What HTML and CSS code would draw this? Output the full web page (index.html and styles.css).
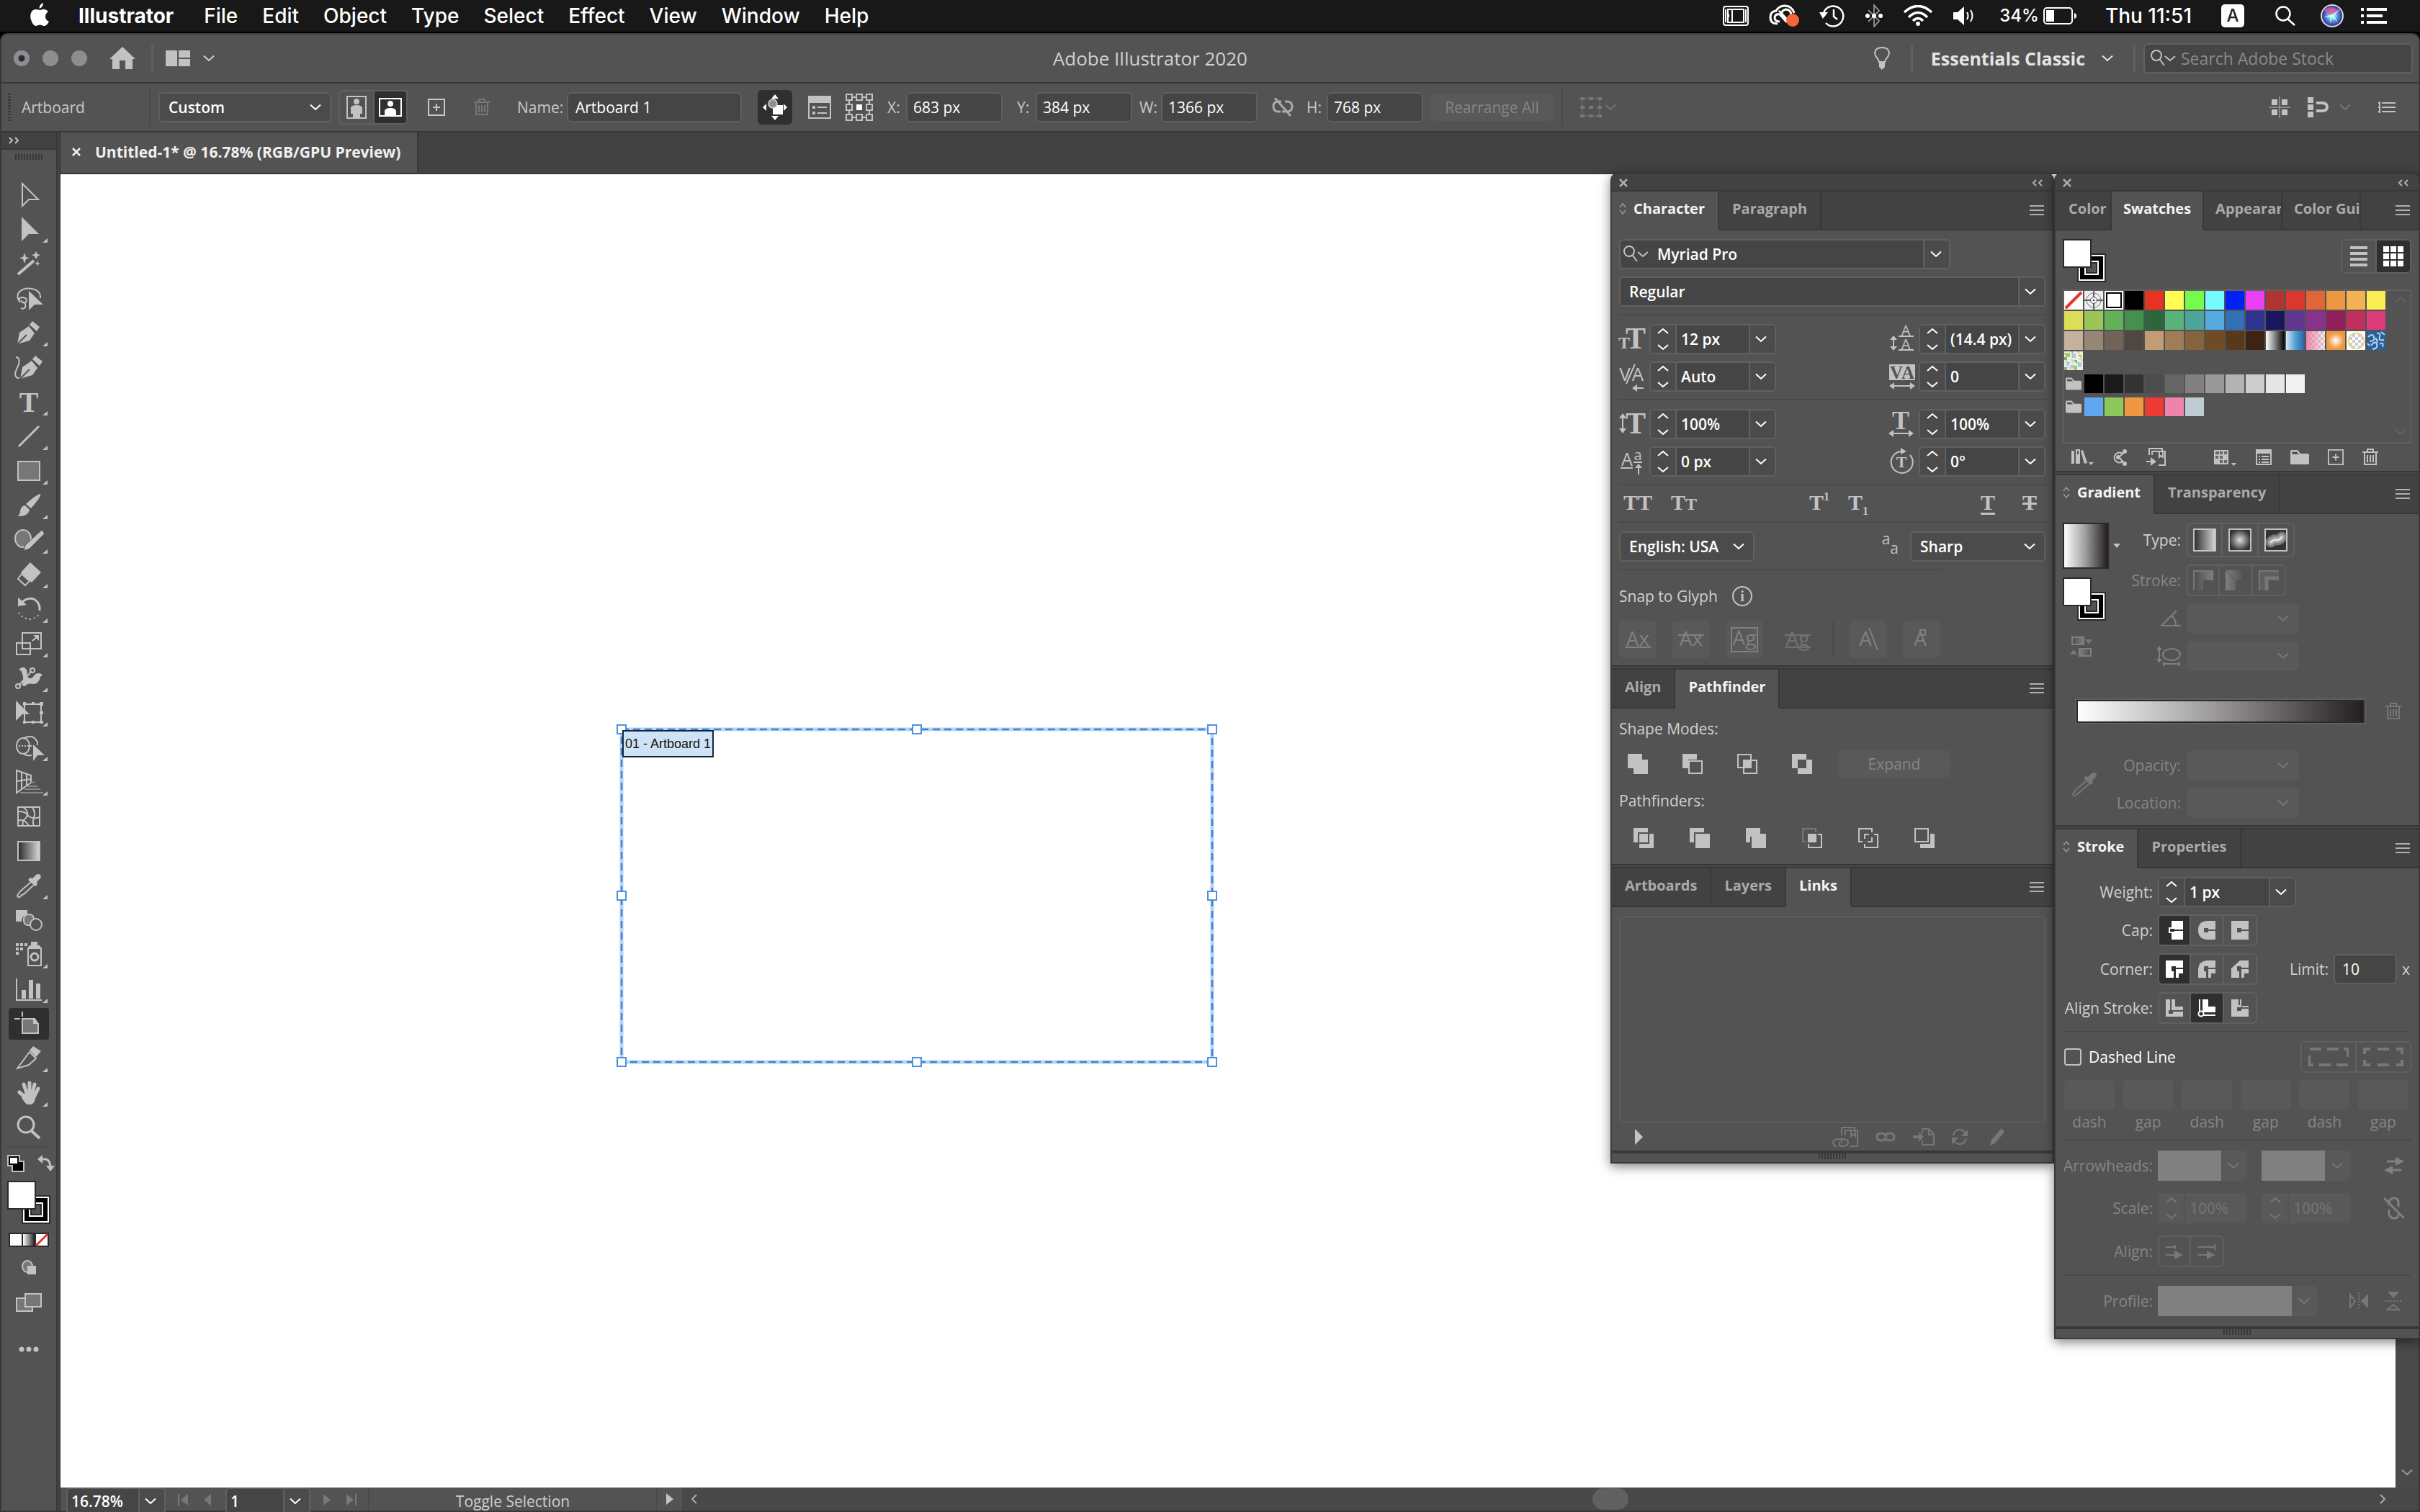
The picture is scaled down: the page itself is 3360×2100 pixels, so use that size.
FILE: index.html
```html
<!DOCTYPE html>
<html lang="en">
<head>
<meta charset="utf-8">
<title>Adobe Illustrator 2020</title>
<link rel="stylesheet" href="styles.css">
</head>
<body>
<svg class="defs" aria-hidden="true">
  <defs>
    <linearGradient id="g-dark"><stop offset="0" stop-color="#2a2a2a"/><stop offset="1" stop-color="#d8d8d8"/></linearGradient>
    <linearGradient id="g-dim"><stop offset="0" stop-color="#4c4c4c"/><stop offset="1" stop-color="#808080"/></linearGradient>
    <linearGradient id="g-dimr"><stop offset="0" stop-color="#808080"/><stop offset="1" stop-color="#4c4c4c"/></linearGradient>
    <linearGradient id="g-light"><stop offset="0" stop-color="#fff"/><stop offset="1" stop-color="#222"/></linearGradient>
    <radialGradient id="g-rad"><stop offset="0" stop-color="#e0e0e0"/><stop offset="1" stop-color="#333"/></radialGradient>
    <radialGradient id="g-siri" cx=".5" cy=".5" r=".5"><stop offset="0" stop-color="#fff"/><stop offset=".35" stop-color="#5fd0e0"/><stop offset=".7" stop-color="#4a5fc8"/><stop offset="1" stop-color="#3a2a6a"/></radialGradient>
  </defs>
  <symbol id="chev" viewBox="0 0 16 10"><path d="M1 1.500L8 8L15 1.500" fill="none" stroke="currentColor" stroke-width="2"/></symbol>
  <symbol id="steps" viewBox="0 0 16 34"><path d="M1 9L8 3L15 9M1 25L8 31L15 25" fill="none" stroke="currentColor" stroke-width="2"/></symbol>
  <symbol id="burger" viewBox="0 0 20 14"><path d="M0 1H20M0 7H20M0 13H20" stroke="currentColor" stroke-width="2"/></symbol>
  <symbol id="updown" viewBox="0 0 10 16"><path d="M1 6L5 1L9 6M1 10L5 15L9 10" fill="none" stroke="currentColor" stroke-width="1.500"/></symbol>
  <symbol id="cross" viewBox="0 0 12 12"><path d="M1 1L11 11M11 1L1 11" stroke="currentColor" stroke-width="2.500"/></symbol>
  <symbol id="ff" viewBox="0 0 14 10"><path d="M1 1L5 5L1 9M9 1L13 5L9 9" fill="none" stroke="currentColor" stroke-width="2"/></symbol>
  <symbol id="rew" viewBox="0 0 14 10"><path d="M5 1L1 5L5 9M13 1L9 5L13 9" fill="none" stroke="currentColor" stroke-width="2"/></symbol>
  <symbol id="trash" viewBox="0 0 22 24"><path d="M7 4V1H15V4M0 5H22M3 5V22H19V5M7 9V19M11 9V19M15 9V19" fill="none" stroke="currentColor" stroke-width="2"/></symbol>
  <symbol id="plus" viewBox="0 0 24 24"><path d="M1 1H23V23H1ZM12 7V17M7 12H17" fill="none" stroke="currentColor" stroke-width="2"/></symbol>
  <symbol id="magnify" viewBox="0 0 40 28"><path d="M15 16L21 24M22 11L29 17L36 11" fill="none" stroke="currentColor" stroke-width="2"/><circle cx="10" cy="10" r="7" fill="none" stroke="currentColor" stroke-width="2"/></symbol>
  <symbol id="folder" viewBox="0 0 26 20"><path d="M0 2Q0 0 2 0H10L14 5H24Q26 5 26 7V18Q26 20 24 20H2Q0 20 0 18Z" fill="currentColor"/><path d="M2.500 2.500H9L12 6H2.500Z" fill="#535353"/></symbol>
  <symbol id="unlink" viewBox="0 0 30 26"><path d="M13 5H7Q2 6 2 12Q2 18 8 19H12M14 19H22Q28 18 28 12Q28 5 21 5H18M4 0L26 25" fill="none" stroke="currentColor" stroke-width="3"/></symbol>
  <symbol id="fillstroke" viewBox="0 0 60 60"><path d="M20 20H60V60H20Z" fill="#2b2b2b"/><path d="M22 22H58V58H22Z" fill="#fff"/><path d="M24 24H56V56H24Z" fill="#000"/><path d="M30 30H50V50H30Z" fill="#fff"/><path d="M32 32H48V48H32Z" fill="#2b2b2b"/><path d="M34 34H46V46H34Z" fill="#535353"/><path d="M0 0H40V40H0Z" fill="#2b2b2b"/><path d="M2 2H38V38H2Z" fill="#fff"/></symbol>
  <symbol id="grip" viewBox="0 0 38 8"><path d="M1 0V8M5 0V8M9 0V8M13 0V8M17 0V8M21 0V8M25 0V8M29 0V8M33 0V8M37 0V8" stroke="#383838" stroke-width="2"/></symbol>
  <symbol id="dropper" viewBox="0 0 34 34"><path d="M20 12L5 25Q4 28 2 29Q0 33 3 33Q6 33 7 30Q11 29 12 27L24 16" fill="none" stroke="currentColor" stroke-width="2"/><path d="M16 9L19 6L22 7L27 2Q30 0 33 2Q35 5 32 8L28 12L29 15L26 18Z" fill="currentColor"/></symbol>
</svg>

<header class="menubar">
  <svg class="apple" viewBox="0 0 26 32"><path d="M18 0Q18 6 12.500 8Q12.500 2 18 0ZM13 10Q15 10 17 9Q21 8 25 12Q21 15 21 19Q21 24 26 26Q23 32 19 32Q17 32 16 31Q13.500 30 11 31Q9 32 7.500 32Q4 31 2 26Q-1 20 1 14Q3 9 8 9Q10 9 13 10Z" fill="#fff"/></svg>
  <nav class="menus">
    <a href="#" class="app">Illustrator</a><a href="#">File</a><a href="#">Edit</a><a href="#">Object</a><a href="#">Type</a><a href="#">Select</a><a href="#">Effect</a><a href="#">View</a><a href="#">Window</a><a href="#">Help</a>
  </nav>
  <div class="tray">
    <svg width="36" height="28" viewBox="0 0 36 28" fill="none" stroke="#fff" stroke-width="2"><rect x="1" y="1" width="34" height="26" rx="3"/><rect x="7" y="5" width="22" height="18"/><path d="M13 5V23M4 5V23M32 5V23M8 12V16"/></svg>
    <svg width="42" height="32" viewBox="0 0 42 32"><path d="M12 27Q2 27 2 18Q2 10 10 9Q14 2 22 2Q32 2 35 12" fill="none" stroke="#fff" stroke-width="3"/><path d="M15 24Q8 24 8 18Q9 13 15 14L25 25M18 14Q17 8 24 7Q31 8 31 15M14 9L28 24" fill="none" stroke="#fff" stroke-width="3"/><circle cx="33" cy="22" r="9" fill="#f7643c"/></svg>
    <svg width="36" height="32" viewBox="0 0 36 32" fill="none" stroke="#fff" stroke-width="2.500"><path d="M6 12A14 14 0 1 1 9 26M20 7V17L25 21"/><path d="M0 11H12L5 20Z" fill="#fff" stroke="none"/></svg>
    <svg width="24" height="32" viewBox="0 0 24 32"><path d="M4 8L19 23L12 31V1L19 9L4 24" fill="none" stroke="#8a8a8a" stroke-width="2"/><circle cx="3" cy="16" r="3" fill="#fff"/><circle cx="12" cy="16" r="3" fill="#fff"/><circle cx="21" cy="16" r="3" fill="#fff"/></svg>
    <svg width="42" height="30" viewBox="0 0 42 30" fill="none" stroke="#fff" stroke-width="3.500"><path d="M2 10Q21 -7 40 10M8 17Q21 4 34 17M14 22Q21 15 28 22"/><circle cx="21" cy="26" r="3" fill="#fff" stroke="none"/></svg>
    <svg width="28" height="26" viewBox="0 0 28 26"><path d="M0 8H6L15 0V26L6 18H0Z" fill="#fff"/><path d="M19 8Q22 13 19 18M24 5Q29 13 24 21" fill="none" stroke="#fff" stroke-width="2"/></svg>
    <span class="battery">34%
      <svg width="46" height="24" viewBox="0 0 46 24"><rect x="1" y="1" width="39" height="22" rx="4" fill="none" stroke="#fff" stroke-width="2"/><rect x="4" y="4" width="11" height="16" fill="#fff"/><path d="M43 8Q46 9 46 12Q46 15 43 16Z" fill="#fff"/></svg>
    </span>
    <span class="clock">Thu 11:51</span>
    <span class="input-src">A</span>
    <svg class="spot" width="30" height="28" viewBox="0 0 30 28" fill="none" stroke="#fff" stroke-width="2.500"><circle cx="12" cy="11" r="9.500"/><path d="M18 18L28 27"/></svg>
    <svg width="32" height="32" viewBox="0 0 32 32"><circle cx="16" cy="16" r="15" fill="url(#g-siri)" stroke="#d8d8e8" stroke-width="2"/><path d="M5 8Q14 0 27 9Q22 13 16 15Q9 14 5 8Z" fill="#d85a9a" opacity=".8"/><path d="M4 18Q12 15 15 14L27 7Q22 12 19 16L24 25L16 18L13 26L13 18Z" fill="#d8ffff" opacity=".7"/></svg>
    <svg width="36" height="22" viewBox="0 0 36 22"><path d="M0 2H4M0 11H4M0 20H4M8 2H36M8 11H30M8 20H36" stroke="#fff" stroke-width="4"/></svg>
  </div>
</header>

<div class="window">
  <div class="titlebar">
    <div class="title-left">
      <div class="lights"><i class="dot-in"></i><i></i><i></i></div>
      <button class="plain" aria-label="Home"><svg width="36" height="32" viewBox="0 0 36 32"><path d="M18 0L36 17H32V31H22V19H14V31H4V17H0Z" fill="#c2c2c2"/></svg></button>
      <span class="vsep"></span>
      <button class="plain arrange" aria-label="Arrange documents"><svg width="34" height="22" viewBox="0 0 34 22"><path d="M0 0H16V22H0ZM18 0H34V10H18ZM18 12H34V22H18Z" fill="#c2c2c2"/></svg><svg class="chev"><use href="#chev"/></svg></button>
    </div>
    <h1>Adobe Illustrator 2020</h1>
    <div class="title-right">
      <svg width="24" height="34" viewBox="0 0 24 34"><path d="M8 22Q7 18 4 15Q2 12 2 9Q3 2 12 2Q21 2 22 9Q22 12 20 15Q17 18 16 22Z" fill="none" stroke="#c2c2c2" stroke-width="2"/><path d="M8 22H16V29L12 33L8 29Z" fill="#c2c2c2"/></svg>
      <span class="vsep"></span>
      <button class="plain workspace">Essentials Classic <svg class="chev"><use href="#chev"/></svg></button>
      <span class="vsep"></span>
      <label class="stock"><svg width="40" height="28"><use href="#magnify"/></svg><input type="text" placeholder="Search Adobe Stock" aria-label="Search Adobe Stock"></label>
    </div>
  </div>

  <div class="controlbar">
    <span class="dots-grip"></span>
    <span class="ctl-name">Artboard</span>
    <span class="hair"></span>
    <div class="select preset"><select aria-label="Preset"><option>Custom</option></select><svg class="chev"><use href="#chev"/></svg></div>
    <div class="seg orient">
      <button aria-label="Portrait"><svg width="28" height="32" viewBox="0 0 28 32"><rect x="1" y="1" width="26" height="30" fill="none" stroke="#c2c2c2" stroke-width="2"/><circle cx="14" cy="8" r="4" fill="#c2c2c2"/><path d="M6 25V16Q8 13 14 13Q20 13 22 16V25H19V31H9V25Z" fill="#c2c2c2"/></svg></button>
      <button class="on" aria-label="Landscape"><svg width="32" height="26" viewBox="0 0 32 26"><rect x="1" y="1" width="30" height="24" fill="none" stroke="#fff" stroke-width="2"/><circle cx="16" cy="8" r="4" fill="#fff"/><path d="M8 25V18Q9 14 16 14Q23 14 24 18V25Z" fill="#fff"/></svg></button>
    </div>
    <button class="plain" aria-label="New artboard"><svg width="24" height="24"><use href="#plus"/></svg></button>
    <button class="plain dim del-art" aria-label="Delete artboard"><svg width="22" height="24"><use href="#trash"/></svg></button>
    <label for="ab-name" class="lab-name">Name:</label><input id="ab-name" class="box w-name" value="Artboard 1">
    <button class="darkbtn" aria-label="Move artwork with artboard"><svg width="34" height="36" viewBox="0 0 34 36"><path d="M17 0L22 6H12ZM17 36L22 30H12ZM0 18L5 13V23ZM34 18L29 13V23Z" fill="#fff"/><rect x="14" y="15" width="14" height="13" fill="#fff"/><circle cx="14" cy="13" r="6" fill="#909090" stroke="#ddd" stroke-width="1.500"/></svg></button>
    <button class="plain opt" aria-label="Artboard options"><svg width="32" height="32" viewBox="0 0 32 32"><path d="M1 1H31V31H1Z" fill="none" stroke="#c2c2c2" stroke-width="2"/><path d="M0 0H32V10H0ZM6 14H10V18H6ZM6 22H10V26H6ZM13 15H26V17H13ZM13 23H26V25H13Z" fill="#c2c2c2"/></svg></button>
    <button class="plain refp" aria-label="Reference point"><svg width="38" height="38" viewBox="0 0 38 38"><path d="M1 1H9V9H1ZM15 1H23V9H15ZM29 1H37V9H29ZM1 15H9V23H1ZM29 15H37V23H29ZM1 29H9V37H1ZM15 29H23V37H15ZM29 29H37V37H29ZM9 5H15M23 5H29M9 33H15M23 33H29M5 9V15M5 23V29M33 9V15M33 23V29" fill="none" stroke="#c2c2c2" stroke-width="2"/><path d="M15 15H23V23H15Z" fill="#fff"/></svg></button>
    <label for="fx" class="lab-x">X:</label><input id="fx" class="box w-num" value="683 px">
    <label for="fy" class="lab-y">Y:</label><input id="fy" class="box w-num" value="384 px">
    <label for="fw" class="lab-w">W:</label><input id="fw" class="box w-num" value="1366 px">
    <button class="plain linkb" aria-label="Constrain proportions"><svg width="30" height="26"><use href="#unlink"/></svg></button>
    <label for="fh" class="lab-h">H:</label><input id="fh" class="box w-num" value="768 px">
    <button class="flat rearr" disabled>Rearrange All</button>
    <span class="hair"></span>
    <button class="plain dim alignto" aria-label="Align to"><svg width="30" height="30" viewBox="0 0 30 30"><path d="M0 3H6M12 3H18M24 3H30M0 15H6M24 15H30M12 15H18M0 27H6M12 27H18M24 27H30" stroke="currentColor" stroke-width="4"/><path d="M3 3V27M27 3V27M3 3H27M3 27H27" stroke="currentColor" stroke-width="1"/></svg><svg class="chev"><use href="#chev"/></svg></button>
    <div class="ctl-right">
      <button class="plain" aria-label="Grid"><svg width="30" height="30" viewBox="0 0 30 30"><path d="M4 4H12V12H4ZM18 4H26V12H18ZM4 18H12V26H4ZM18 18H26V26H18Z" fill="#c2c2c2"/><path d="M15 0V30M0 15H30" stroke="#999" stroke-width="1.500"/></svg></button>
      <button class="plain snap" aria-label="Snap"><svg width="30" height="28" viewBox="0 0 30 28"><path d="M0 0H8V8H0ZM0 10H8V18H0ZM0 20H8V28H0Z" fill="#c2c2c2"/><path d="M12 8H20Q27 8 27 13.500Q27 19 20 19H12" fill="none" stroke="#c2c2c2" stroke-width="4"/></svg><svg class="chev dim"><use href="#chev"/></svg></button>
      <button class="plain" aria-label="Control menu"><svg width="24" height="16" viewBox="0 0 24 16"><path d="M0 2H3M0 8H3M0 14H3M5 2H24M5 8H24M5 14H24M2 0V16" stroke="#c2c2c2" stroke-width="2"/></svg></button>
    </div>
  </div>

  <div class="work">
    <aside class="tools">
      <button class="tools-head" aria-label="Expand tools"><svg width="14" height="10"><use href="#ff"/></svg></button>
      <svg class="tools-grip" width="38" height="8"><use href="#grip"/></svg>
      <div class="toollist">
        <button aria-label="Selection"><svg viewBox="0 0 60 48"><path class="l" d="M21 9V40L30 31L43 31Z"/></svg></button>
        <button aria-label="Direct selection"><svg viewBox="0 0 60 48"><path class="f" d="M20 7V41L30 31H44ZM56 37V43H49Z"/></svg></button>
        <button aria-label="Magic wand"><svg viewBox="0 0 60 48"><path d="M15 39L37 20" class="l w4"/><path class="f" d="M24 9L26 15L31 16L26 18L24 24L22 18L17 16L22 15ZM40 7L42 11L46 12L42 14L40 18L38 14L34 12L38 11ZM42 20L43 23L46 24L43 25L42 28L41 25L38 24L41 23Z"/></svg></button>
        <button aria-label="Lasso"><svg viewBox="0 0 60 48"><path class="l" d="M18 30Q11 22 17 15Q24 9 34 11Q45 13 46 21V24M18 30Q14 23 22 23Q29 24 26 30Q20 31 20 27M20 30Q27 30 25 37Q22 40 19 38"/><path class="f" d="M30 14V41L38 33H50Z"/></svg></button>
        <button aria-label="Pen"><svg viewBox="0 0 60 48"><path class="f" d="M14 40L17 24L30 15L38 25L31 35ZM35 8L45 16L41 22L31 13Z"/><path d="M14 40L27 27" stroke="#535353" stroke-width="2"/><path class="f" d="M56 37V43H49Z"/></svg></button>
        <button aria-label="Curvature"><svg viewBox="0 0 60 48"><path class="f" d="M18 40L21 24L34 15L42 25L35 35ZM39 8L49 16L45 22L35 13Z"/><path d="M18 40L31 27" stroke="#535353" stroke-width="2"/><path class="l" d="M12 10Q18 10 16 20Q13 27 11 32Q11 40 17 39"/></svg></button>
        <button aria-label="Type"><svg viewBox="0 0 60 48"><text x="30" y="38" class="glyph" font-size="40">T</text><path class="f" d="M56 37V43H49Z"/></svg></button>
        <button aria-label="Line segment"><svg viewBox="0 0 60 48"><path class="l w3" d="M16 38L44 10"/><path class="f" d="M56 37V43H49Z"/></svg></button>
        <button aria-label="Rectangle"><svg viewBox="0 0 60 48"><rect x="15" y="11" width="30" height="26" class="l g"/><path class="f" d="M56 37V43H49Z"/></svg></button>
        <button aria-label="Paintbrush"><svg viewBox="0 0 60 48"><path class="f" d="M46 8Q48 11 33 28L26 22Q40 9 46 8ZM25 24L31 30Q29 40 14 39Q18 37 18 31Q20 24 25 24Z"/><path class="f" d="M56 37V43H49Z"/></svg></button>
        <button aria-label="Shaper"><svg viewBox="0 0 60 48"><ellipse cx="22" cy="22" rx="11" ry="12" class="l g"/><path class="f" d="M48 10L52 15L31 36L23 39L25 31Z" stroke="#535353" stroke-width="1"/><path class="f" d="M56 37V43H49Z"/></svg></button>
        <button aria-label="Eraser"><svg viewBox="0 0 60 48"><path class="f" d="M32 7L47 21L34 35L19 21Z"/><path class="l" d="M20 23L31 33L25 39L15 30Z"/><path class="f" d="M56 37V43H49Z"/></svg></button>
        <button aria-label="Rotate"><svg viewBox="0 0 60 48"><path class="l w3" d="M20 15Q28 7 37 10Q46 15 45 26"/><path class="f" d="M15 8V20L27 18Z"/><path class="l" d="M16 29Q22 38 32 38Q42 36 45 30" stroke-dasharray="2 4"/><path class="f" d="M56 37V43H49Z"/></svg></button>
        <button aria-label="Scale"><svg viewBox="0 0 60 48"><path class="l" d="M21 9H47V31H21ZM13 23H32V39H13ZM35 20L42 14"/><path class="f" d="M36 12H44V20ZM56 37V43H49Z"/></svg></button>
        <button aria-label="Width"><svg viewBox="0 0 60 48"><path class="f" d="M16 12Q22 6 26 11Q29 15 27 21Q32 27 36 22Q41 14 49 19L46 22Q44 32 36 32Q28 30 25 35L20 34Q24 26 21 18Q20 13 16 12Z"/><path class="l" d="M16 34L34 14"/><circle class="l" cx="15" cy="35" r="3"/><circle class="l" cx="35" cy="13" r="3"/><path class="f" d="M56 37V43H49Z"/></svg></button>
        <button aria-label="Free transform"><svg viewBox="0 0 60 48"><path class="l" d="M24 14V37H47V12H24"/><path class="f" d="M12 7V35L21 26H31ZM22 9H26V14H22ZM34 9H38V13H34ZM45 9H50V14H45ZM45 22H50V26H45ZM45 35H50V39H45ZM34 35H38V39H34ZM22 35H26V39H22ZM56 37V43H49Z"/></svg></button>
        <button aria-label="Shape builder"><svg viewBox="0 0 60 48"><ellipse cx="22" cy="22" rx="9" ry="11" class="l"/><path class="l" d="M22 12Q36 4 42 17V21M24 34Q28 36 34 35"/><path class="l" d="M16 22H36" stroke-dasharray="2 2"/><path class="f" d="M36 20V43L42 35H52ZM56 37V43H49Z"/></svg></button>
        <button aria-label="Perspective grid"><svg viewBox="0 0 60 48"><path class="l" d="M13 8L33 15V25L13 39ZM20 11V33M27 13V29M13 23L33 20"/><path d="M33 25L38 24M28 30H42M24 34H46M18 39H50" stroke="#888" stroke-width="2"/><path class="f" d="M56 37V43H49Z"/></svg></button>
        <button aria-label="Mesh"><svg viewBox="0 0 60 48"><rect x="15" y="11" width="30" height="26" class="l"/><path class="l" d="M15 17Q26 16 30 24Q36 28 45 25M22 11Q32 18 26 26Q20 30 22 37M35 11Q40 20 37 25Q35 32 37 37M15 30Q24 26 30 37"/></svg></button>
        <button aria-label="Gradient"><svg viewBox="0 0 60 48"><rect x="15" y="11" width="30" height="26" fill="url(#g-dark)" stroke="#c2c2c2" stroke-width="2"/></svg></button>
        <button aria-label="Eyedropper"><svg viewBox="0 0 60 48"><use href="#dropper" x="13" y="7" width="34" height="34"/><path class="f" d="M56 37V43H49Z"/></svg></button>
        <button aria-label="Blend"><svg viewBox="0 0 60 48"><path class="f" d="M12 10H28V15Q20 18 20 26H12Z"/><rect x="23" y="16" width="14" height="15" rx="6" class="l g"/><ellipse cx="40" cy="30" rx="8" ry="8" class="l k"/></svg></button>
        <button aria-label="Symbol sprayer"><svg viewBox="0 0 60 48"><path class="f" d="M12 8H16V12H12ZM18 8H22V12H18ZM24 8H28V12H24ZM12 14H16V18H12ZM18 14H22V18H18ZM12 20H16V24H12ZM33 6H42V12H33Z"/><rect x="29" y="15" width="18" height="24" class="l"/><path class="f" d="M31 11H45L48 16H28Z"/><circle cx="38" cy="27" r="5" class="l w3"/><path class="f" d="M56 37V43H49Z"/></svg></button>
        <button aria-label="Column graph"><svg viewBox="0 0 60 48"><path class="l" d="M13 9V39H48"/><path class="f" d="M20 25H26V37H20ZM30 11H36V37H30ZM40 16H46V37H40ZM56 37V43H49Z"/></svg></button>
        <button class="on" aria-label="Artboard"><svg viewBox="0 0 60 48"><path class="l" d="M10 17H18M21 7V14"/><path class="l g" d="M21 17H38L43 24V37H21Z"/><path class="f" d="M36 16L44 24H36Z"/></svg></button>
        <button aria-label="Slice"><svg viewBox="0 0 60 48"><path class="l" d="M14 38L31 15L40 24L30 33Z"/><path class="f" d="M36 7L47 14L40 22L31 13Z"/><path class="f" d="M56 37V43H49Z"/></svg></button>
        <button aria-label="Hand"><svg viewBox="0 0 60 48"><path class="l w5" stroke-linecap="round" d="M17 23L24 29M23 12L27 24M31 10V24M38 12L35 24M43 18L38 28"/><path class="f" d="M20 25H40Q39 39 33 40H28Q24 38 20 30ZM56 37V43H49Z"/></svg></button>
        <button aria-label="Zoom"><svg viewBox="0 0 60 48"><circle cx="26" cy="20" r="11" class="l w3"/><path class="l w4" d="M34 29L45 39"/></svg></button>
      </div>
      <div class="colors">
        <div class="swaprow">
          <svg width="24" height="24" viewBox="0 0 24 24"><path d="M0 0H18V8H24V24H6V16H0Z" fill="#c2c2c2"/><path d="M8 10H22V22H8Z" fill="#000"/><path d="M2 2H16V14H2Z" fill="#000"/><path d="M4 4H14V12H4Z" fill="#fff"/></svg>
          <svg width="24" height="24" viewBox="0 0 24 24"><path d="M5 6H12Q18 8 18 18" fill="none" stroke="#c2c2c2" stroke-width="3"/><path d="M0 6L7 0V12ZM12 15H24L18 23Z" fill="#c2c2c2"/></svg>
        </div>
        <svg width="60" height="60"><use href="#fillstroke"/></svg>
        <svg class="modes" width="56" height="20" viewBox="0 0 56 20"><path d="M0 0H56V20H0Z" fill="#2b2b2b"/><path d="M2 2H18V18H2Z" fill="#fff"/><rect x="20" y="2" width="16" height="16" fill="url(#g-light)"/><path d="M38 2H54V18H38Z" fill="#fff"/><path d="M38 18L54 2" stroke="#e8362a" stroke-width="3"/></svg>
        <svg class="drawmode" width="20" height="20" viewBox="0 0 20 20"><ellipse cx="8" cy="9" rx="7" ry="8" fill="#777" stroke="#c2c2c2" stroke-width="2"/><path d="M8 8H20V20H8Z" fill="#c2c2c2"/></svg>
        <svg class="screenmode" width="36" height="26" viewBox="0 0 36 26"><path d="M1 7H23V25H1Z" fill="#777" stroke="#c2c2c2" stroke-width="2"/><path d="M13 1H35V19H13Z" fill="#777" stroke="#c2c2c2" stroke-width="2"/></svg>
        <svg class="more" width="28" height="8" viewBox="0 0 28 8" fill="#c2c2c2"><circle cx="4" cy="4" r="3.500"/><circle cx="14" cy="4" r="3.500"/><circle cx="24" cy="4" r="3.500"/></svg>
      </div>
    </aside>

    <main class="doc">
      <div class="doctabs"><div class="doctab"><button class="plain" aria-label="Close"><svg width="12" height="12"><use href="#cross"/></svg></button><span>Untitled-1* @ 16.78% (RGB/GPU Preview)</span></div></div>
      <div class="stage">
        <div class="canvas">
          <svg class="artboard" viewBox="0 0 834 476"><rect x="7" y="7" width="820" height="462" fill="#fff" stroke="#b9d3f3" stroke-width="5"/><rect x="7" y="7" width="820" height="462" fill="none" stroke="#3f82d6" stroke-width="2.500" stroke-dasharray="10 6"/><g fill="#fff" stroke="#4d90e0" stroke-width="2"><path d="M1 1H13V13H1ZM411 1H423V13H411ZM821 1H833V13H821ZM1 232H13V244H1ZM821 232H833V244H821ZM1 463H13V475H1ZM411 463H423V475H411ZM821 463H833V475H821Z"/></g></svg>
          <span class="ab-label">01 - Artboard 1</span>
        </div>
        <div class="vscroll"><svg class="chev"><use href="#chev"/></svg></div>
      </div>
      <footer class="status">
        <div class="combo zoomf"><input aria-label="Zoom" value="16.78%"><button aria-label="Zoom list"><svg class="chev"><use href="#chev"/></svg></button></div>
        <svg class="nav" width="48" height="16" viewBox="0 0 48 16" fill="#777"><path d="M0 0H2V16H0ZM14 0V16L4 8ZM46 0V16L36 8Z"/></svg>
        <div class="combo pagef"><input aria-label="Artboard number" value="1"><button aria-label="Artboard list"><svg class="chev"><use href="#chev"/></svg></button></div>
        <svg class="nav" width="48" height="16" viewBox="0 0 48 16" fill="#777"><path d="M0 0V16L10 8ZM32 0V16L42 8ZM44 0H46V16H44Z"/></svg>
        <span class="toggle">Toggle Selection</span>
        <button class="play" aria-label="Status menu"><svg width="10" height="16" viewBox="0 0 10 16"><path d="M0 0V16L10 8Z" fill="#c2c2c2"/></svg></button>
        <div class="hscroll"><svg width="8" height="14" viewBox="0 0 8 14"><path d="M7 1L1 7L7 13" fill="none" stroke="#aaa" stroke-width="2"/></svg><i class="thumb"></i><svg width="8" height="14" viewBox="0 0 8 14"><path d="M1 1L7 7L1 13" fill="none" stroke="#aaa" stroke-width="2"/></svg></div>
      </footer>
    </main>

    <div class="docks">
      <section class="dock dock-a">
        <div class="dock-head"><svg width="12" height="12"><use href="#cross"/></svg><svg width="14" height="10"><use href="#rew"/></svg></div>
        <div class="tabs"><button class="tab on lead"><svg width="10" height="16"><use href="#updown"/></svg>Character</button><button class="tab">Paragraph</button><span class="fill"><svg class="burger"><use href="#burger"/></svg></span></div>
        <div class="body">
          <div class="combo w460"><svg width="40" height="28"><use href="#magnify"/></svg><input aria-label="Font family" value="Myriad Pro"><button aria-label="Fonts"><svg class="chev"><use href="#chev"/></svg></button></div>
          <div class="combo mt10 style"><input aria-label="Font style" value="Regular"><button aria-label="Styles"><svg class="chev"><use href="#chev"/></svg></button></div>
          <hr>
          <div class="charrow">
            <svg class="ci" viewBox="0 0 38 40"><text x="23" y="33" class="glyph" font-size="42">T</text><text x="7" y="33" class="glyph" font-size="24">T</text></svg>
            <div class="combo"><span class="step"><svg><use href="#steps"/></svg></span><input aria-label="Font size" value="12 px"><button aria-label="Sizes"><svg class="chev"><use href="#chev"/></svg></button></div>
            <svg class="ci" viewBox="0 0 38 40"><text x="24" y="15" class="glyph thin" font-size="20">A</text><text x="24" y="34" class="glyph thin" font-size="20">A</text><path class="l" d="M14 16H35M14 35H35M7 19V32"/><path class="f" d="M7 15L12 21H2ZM7 36L12 30H2Z"/></svg>
            <div class="combo"><span class="step"><svg><use href="#steps"/></svg></span><input aria-label="Leading" value="(14.4 px)"><button aria-label="Leadings"><svg class="chev"><use href="#chev"/></svg></button></div>
          </div>
          <div class="charrow mt10">
            <svg class="ci" viewBox="0 0 38 40"><text x="8" y="26" class="glyph thin" font-size="26">V</text><text x="26" y="26" class="glyph thin" font-size="26">A</text><path class="l" d="M10 30L22 3M22 36H34"/><path class="f" d="M18 36L25 31V41Z"/></svg>
            <div class="combo"><span class="step"><svg><use href="#steps"/></svg></span><input aria-label="Kerning" value="Auto"><button aria-label="Kernings"><svg class="chev"><use href="#chev"/></svg></button></div>
            <svg class="ci" viewBox="0 0 38 40"><path class="f" d="M1 3H37V25H1Z"/><text x="11" y="23" class="glyph cut" font-size="25">V</text><text x="27" y="23" class="glyph cut" font-size="25">A</text><path class="l" d="M4 33H34"/><path class="f" d="M1 33L8 28V38ZM37 33L30 28V38Z"/></svg>
            <div class="combo"><span class="step"><svg><use href="#steps"/></svg></span><input aria-label="Tracking" value="0"><button aria-label="Trackings"><svg class="chev"><use href="#chev"/></svg></button></div>
          </div>
          <hr>
          <div class="charrow">
            <svg class="ci" viewBox="0 0 38 40"><text x="23" y="33" class="glyph" font-size="42">T</text><path class="l" d="M5 9V29"/><path class="f" d="M5 5L10 12H0ZM5 33L10 26H0Z"/></svg>
            <div class="combo"><span class="step"><svg><use href="#steps"/></svg></span><input aria-label="Vertical scale" value="100%"><button aria-label="Scales"><svg class="chev"><use href="#chev"/></svg></button></div>
            <svg class="ci" viewBox="0 0 38 40"><text x="17" y="27" class="glyph" font-size="36">T</text><path class="l" d="M5 33H31"/><path class="f" d="M0 33L7 28V38ZM35 33L28 28V38Z"/></svg>
            <div class="combo"><span class="step"><svg><use href="#steps"/></svg></span><input aria-label="Horizontal scale" value="100%"><button aria-label="Widths"><svg class="chev"><use href="#chev"/></svg></button></div>
          </div>
          <div class="charrow mt10">
            <svg class="ci" viewBox="0 0 38 40"><text x="11" y="26" class="glyph thin" font-size="25">A</text><text x="26" y="18" class="glyph thin" font-size="20">a</text><path class="l" d="M2 29H19M20 21H32M27 26V38"/><path class="f" d="M27 23L32 29H22Z"/></svg>
            <div class="combo"><span class="step"><svg><use href="#steps"/></svg></span><input aria-label="Baseline shift" value="0 px"><button aria-label="Shifts"><svg class="chev"><use href="#chev"/></svg></button></div>
            <svg class="ci" viewBox="0 0 38 40"><text x="18" y="28" class="glyph" font-size="22">T</text><path class="l" d="M30 11A15 15 0 1 1 17 6"/><path class="f" d="M17 1L25 6L17 10Z"/></svg>
            <div class="combo"><span class="step"><svg><use href="#steps"/></svg></span><input aria-label="Rotation" value="0°"><button aria-label="Rotations"><svg class="chev"><use href="#chev"/></svg></button></div>
          </div>
          <hr class="tight">
          <div class="ttrow">
            <span><button>TT</button><button>T<small>T</small></button></span>
            <span><button>T<sup>1</sup></button><button>T<sub>1</sub></button></span>
            <span><button class="u">T</button><button class="s">T</button></span>
          </div>
          <hr class="tight">
          <div class="langrow">
            <div class="select"><select aria-label="Language"><option>English: USA</option></select><svg class="chev"><use href="#chev"/></svg></div>
            <label for="aa" class="aa"><sup>a</sup><sub>a</sub></label>
            <div class="select"><select id="aa"><option>Sharp</option></select><svg class="chev"><use href="#chev"/></svg></div>
          </div>
          <hr class="short">
          <div class="snaprow"><span>Snap to Glyph</span><svg width="28" height="28" viewBox="0 0 28 28"><circle cx="14" cy="14" r="13" fill="none" stroke="#c2c2c2" stroke-width="2"/><text x="14" y="21" class="glyph" font-size="20">i</text></svg></div>
          <div class="glyphrow">
            <button disabled><svg viewBox="0 0 52 52"><text x="26" y="35" class="sn">Ax</text><path class="l" d="M8 37H44"/></svg></button>
            <button disabled><svg viewBox="0 0 52 52"><text x="26" y="35" class="sn">Ax</text><path class="l" d="M8 20H44"/></svg></button>
            <button disabled><svg viewBox="0 0 52 52"><text x="26" y="34" class="sn">Ag</text><path class="l" d="M8 10H44V43H8Z"/></svg></button>
            <button disabled class="nobg"><svg viewBox="0 0 52 52"><text x="26" y="35" class="sn">Ag</text><path class="l" d="M8 20H44M8 37H44"/></svg></button>
            <span class="hair"></span>
            <button disabled><svg viewBox="0 0 52 52"><text x="22" y="35" class="sn">A</text><path class="l" d="M27 10L39 41"/></svg></button>
            <button disabled><svg viewBox="0 0 52 52"><text x="24" y="35" class="sn">A</text><path class="l" d="M24 13H31V20H24Z"/></svg></button>
          </div>
        </div>
        <div class="split"></div>
        <div class="tabs"><button class="tab">Align</button><button class="tab on">Pathfinder</button><span class="fill"><svg class="burger"><use href="#burger"/></svg></span></div>
        <div class="body path">
          <p>Shape Modes:</p>
          <div class="shapes">
            <svg viewBox="0 0 28 28"><path class="f" d="M0 0H20V8H28V28H8V20H0Z"/></svg>
            <svg viewBox="0 0 28 28"><path class="f" d="M0 0H20V8H8V20H0Z"/><path class="l" d="M9 10H27V27H9Z"/></svg>
            <svg viewBox="0 0 28 28"><path class="l" d="M1 1H19V19H1ZM9 9H27V27H9Z"/><path class="f" d="M8 8H20V20H8Z"/></svg>
            <svg viewBox="0 0 28 28"><path class="f" fill-rule="evenodd" d="M0 0H20V8H28V28H8V20H0ZM8 8V20H20V8Z"/></svg>
            <button class="flat expand" disabled>Expand</button>
          </div>
          <p>Pathfinders:</p>
          <div class="finders">
            <svg viewBox="0 0 28 28"><path class="f" d="M0 0H20V6H6V20H0ZM22 8H28V28H8V22H22ZM8 8H20V20H8Z"/></svg>
            <svg viewBox="0 0 28 28"><path class="f" d="M0 0H20V6H6V20H0ZM8 8H28V28H8Z"/></svg>
            <svg viewBox="0 0 28 28"><path class="f" d="M0 0H20V8H28V28H8V12H6V20H0Z"/></svg>
            <svg viewBox="0 0 28 28"><path class="d" d="M6 19H1V1H19V6"/><path class="l" d="M22 9H27V27H9V22"/><path class="f" d="M8 8H20V20H8Z"/></svg>
            <svg viewBox="0 0 28 28"><path class="l" d="M6 19H1V1H19V6M22 9H27V27H9V22M9 15V9H15M13 19H19V13"/></svg>
            <svg viewBox="0 0 28 28"><path class="l" d="M1 1H19V19H1Z"/><path class="f" d="M22 8H28V28H8V22H22Z"/></svg>
          </div>
        </div>
        <div class="split"></div>
        <div class="tabs"><button class="tab">Artboards</button><button class="tab">Layers</button><button class="tab on">Links</button><span class="fill"><svg class="burger"><use href="#burger"/></svg></span></div>
        <div class="body links">
          <div class="linkbox"></div>
          <div class="linkfoot">
            <svg width="11" height="22" viewBox="0 0 11 22"><path class="f" d="M0 0V22L11 11Z"/></svg>
            <span>
              <svg width="36" height="28" viewBox="0 0 36 28"><path d="M13 12V1H31V5M18 12V5H35V27H24M26 5V13L29 10L32 13V5M6 27Q1 26 1 22Q2 17 8 17H10Q14 18 13 23M12 17H16Q22 18 22 22Q21 27 15 27H12Q9 26 10 21"/></svg>
              <svg width="28" height="14" viewBox="0 0 28 14"><path stroke-width="3" d="M14 10Q12 12 8 12Q2 12 2 7Q2 2 8 2Q14 2 15 7M14 4Q16 2 20 2Q26 2 26 7Q26 12 20 12Q14 12 13 7"/></svg>
              <svg width="30" height="24" viewBox="0 0 30 24"><path d="M13 7V1H22L29 8V23H13V17M22 1V9H29"/><path d="M0 12H8" stroke-width="4"/><path d="M8 5L15 12L8 19Z" fill="#777" stroke="none"/></svg>
              <svg width="22" height="24" viewBox="0 0 22 24"><path d="M2 10Q4 2 11 2Q16 2 19 7M20 14Q18 22 11 22Q6 22 3 17"/><path d="M22 2V11H13ZM0 22V13H9Z" fill="#777" stroke="none"/></svg>
              <svg class="last" width="22" height="26" viewBox="0 0 22 26"><path d="M17 1L21 6L8 22L1 25L3 17Z" fill="#777" stroke="none"/></svg>
            </span>
          </div>
        </div>
        <div class="dock-foot"><svg width="38" height="8"><use href="#grip"/></svg></div>
      </section>

      <section class="dock dock-b">
        <div class="dock-head"><svg width="12" height="12"><use href="#cross"/></svg><svg width="14" height="10"><use href="#rew"/></svg></div>
        <div class="tabs"><button class="tab t-color">Color</button><button class="tab on t-sw">Swatches</button><button class="tab t-cut">Appearar</button><button class="tab t-cut">Color Gui</button><span class="fill"><svg class="burger"><use href="#burger"/></svg></span></div>
        <div class="body sw">
          <div class="swtop"><svg width="60" height="60"><use href="#fillstroke"/></svg>
            <div class="seg views"><button aria-label="List view"><svg width="24" height="28" viewBox="0 0 24 28"><path d="M0 2H24M0 10H24M0 18H24M0 26H24" stroke="#c2c2c2" stroke-width="4"/></svg></button><button class="on" aria-label="Grid view"><svg width="28" height="28" viewBox="0 0 28 28"><path fill="#fff" d="M0 0H8V8H0ZM10 0H18V8H10ZM20 0H28V8H20ZM0 10H8V18H0ZM10 10H18V18H10ZM20 10H28V18H20ZM0 20H8V28H0ZM10 20H18V28H10ZM20 20H28V28H20Z"/></svg></button></div>
          </div>
          <div class="swbox">
            <div class="swlist">
              <div class="swgrid">
                <svg viewBox="0 0 26 26"><path d="M0 0H26V26H0Z" fill="#fff"/><path d="M2 24L24 2" stroke="#e8362a" stroke-width="4"/></svg>
                <svg viewBox="0 0 26 26"><path d="M0 0H26V26H0Z" fill="#eee"/><path d="M13 0V26M0 13H26" stroke="#333" stroke-width="1.500"/><circle cx="13" cy="13" r="10" fill="none" stroke="#777"/><circle cx="13" cy="13" r="4.500" fill="#eee" stroke="#555"/><circle cx="13" cy="13" r="1"/></svg>
                <svg viewBox="0 0 26 26"><path d="M0 0H26V26H0Z" fill="#fff"/><path d="M3 3H23V23H3Z" fill="#fff" stroke="#000" stroke-width="2"/></svg>
                <i style="background:#000"></i><i style="background:#e83323"></i><i style="background:#fffd54"></i><i style="background:#75fb4c"></i><i style="background:#75fbfd"></i><i style="background:#0021f5"></i><i style="background:#ea3ff7"></i><i style="background:#b03432"></i><i style="background:#da3731"></i><i style="background:#e16637"></i><i style="background:#ec983f"></i><i style="background:#f1b355"></i><i style="background:#fbed55"></i>
                <i style="background:#dcde55"></i><i style="background:#9bc657"></i><i style="background:#62b159"></i><i style="background:#42914d"></i><i style="background:#2c673b"></i><i style="background:#59b27a"></i><i style="background:#4ca69c"></i><i style="background:#54a9df"></i><i style="background:#2f70b7"></i><i style="background:#2d3490"></i><i style="background:#1a175f"></i><i style="background:#603690"></i><i style="background:#87328b"></i><i style="background:#8f1e59"></i><i style="background:#c1305d"></i><i style="background:#dc3b7a"></i>
                <i style="background:#c5b29d"></i><i style="background:#968676"></i><i style="background:#706458"></i><i style="background:#504740"></i><i style="background:#c09d72"></i><i style="background:#a17d57"></i><i style="background:#85633e"></i><i style="background:#6e4c28"></i><i style="background:#593919"></i><i style="background:#3c2312"></i>
                <i class="s-bw"></i><i class="s-blue"></i><i class="s-pink"></i><i class="s-sun"></i>
                <svg viewBox="0 0 26 26"><path d="M0 0H26V26H0Z" fill="#fff"/><circle cx="13.500" cy="13.500" r="11" fill="#fff" stroke="#e8cf6a" stroke-width="1.500"/><path d="M8 4H12V8H8ZM16 4H20V8H16ZM4 8H8V12H4ZM12 8H16V12H12ZM20 8H24V12H20ZM8 12H12V16H8ZM16 12H20V16H16ZM4 16H8V20H4ZM12 16H16V20H12ZM20 16H23V20H20ZM8 20H12V23H8ZM16 20H20V23H16Z" fill="#ccc"/></svg>
                <svg viewBox="0 0 26 26"><path d="M0 0H26V26H0Z" fill="#2a5f9a"/><path d="M2 8Q8 2 10 8T4 14M14 3Q20 2 18 8T24 12M6 20Q12 12 14 18T8 25M18 18Q24 14 22 22M12 10Q16 12 14 16M1 17L4 20M20 1L25 5" fill="none" stroke="#b8d8f0" stroke-width="2"/></svg>
                <svg viewBox="0 0 26 26"><path d="M0 0H26V26H0Z" fill="#f0f0e0"/><path d="M0 2H8V8H3ZM12 20H18V26H14ZM19 5H24V10Z" fill="#a8c860"/><path d="M10 3H16V9H11ZM2 12L9 16L4 22ZM18 15H24V22H19ZM8 19H14V24H9Z" fill="#a8cce0"/><path d="M16 0H22V5ZM8 9L15 13L12 18ZM19 10H26V15ZM4 22H9V26Z" fill="#e6d8ac"/><path d="M9 0H12V3ZM13 12H18V17ZM0 22H4V26H0ZM0 8H4V12H0Z" fill="#84a888"/></svg>
              </div>
              <div class="swgrid group"><svg class="fold" viewBox="0 0 26 26"><use href="#folder" x="2" y="4" width="22" height="18"/></svg><i style="background:#000"></i><i style="background:#1a1a1a"></i><i style="background:#333"></i><i style="background:#4d4d4d"></i><i style="background:#666"></i><i style="background:#808080"></i><i style="background:#999"></i><i style="background:#b3b3b3"></i><i style="background:#ccc"></i><i style="background:#e6e6e6"></i><i style="background:#f2f2f2"></i></div>
              <div class="swgrid group"><svg class="fold" viewBox="0 0 26 26"><use href="#folder" x="2" y="4" width="22" height="18"/></svg><i style="background:#5fa8f0"></i><i style="background:#8fc85a"></i><i style="background:#f09840"></i><i style="background:#ed3a34"></i><i style="background:#f083ac"></i><i style="background:#bfccd4"></i></div>
            </div>
            <div class="swscroll"><svg class="chev flip"><use href="#chev"/></svg><svg class="chev"><use href="#chev"/></svg></div>
          </div>
          <div class="swfoot">
            <svg width="32" height="24" viewBox="0 0 32 24"><path class="f" d="M0 3H4V21H0ZM6 1H12V21H6ZM13 3L16 2L22 20L18 21ZM24 19H31L27 23Z"/><path d="M8 3H10V8H8Z" fill="#535353"/></svg>
            <svg width="20" height="24" viewBox="0 0 20 24"><path class="l" d="M14 8A7 7 0 1 0 14 17M8 12L16 4M8 12L16 21"/><circle class="f" cx="7" cy="12" r="3"/><circle class="f" cx="16" cy="4" r="3"/><circle class="f" cx="16" cy="21" r="3"/></svg>
            <svg width="28" height="26" viewBox="0 0 28 26"><path class="l" d="M4 10V1H22V5M8 10V5H26V24H17M18 5V13L20 11L23 13V5M0 19H9"/><path class="f" d="M6 13L14 19L6 25Z"/></svg>
            <svg width="32" height="24" viewBox="0 0 32 24"><path class="f" d="M0 2H20V22H0ZM24 20H31L27 24Z"/><path d="M2 4H7V8H2ZM8 4H12V8H8ZM14 4H18V8H14ZM2 10H6V14H2ZM8 10H12V14H8ZM8 16H12V20H8ZM14 16H18V20H14Z" fill="#686868"/></svg>
            <svg width="22" height="22" viewBox="0 0 22 22"><path class="l" d="M1 1H21V21H1ZM4 10H6M4 14H6M4 18H6M8 10H18M8 14H18M8 18H18"/><path class="f" d="M0 0H22V6H0Z"/></svg>
            <svg width="26" height="20"><use href="#folder"/></svg>
            <svg width="22" height="22"><use href="#plus"/></svg>
            <svg width="22" height="24"><use href="#trash"/></svg>
          </div>
        </div>
        <div class="split"></div>
        <div class="tabs"><button class="tab on lead"><svg width="10" height="16"><use href="#updown"/></svg>Gradient</button><button class="tab">Transparency</button><span class="fill"><svg class="burger"><use href="#burger"/></svg></span></div>
        <div class="body grad">
          <div class="gradtop">
            <div class="gradleft">
              <div class="gprev"><i></i><svg width="10" height="6" viewBox="0 0 10 6"><path class="f" d="M0 0H10L5 6Z"/></svg></div>
              <svg width="60" height="60"><use href="#fillstroke"/></svg>
              <svg class="rev" width="32" height="28" viewBox="0 0 32 28"><rect x="3" y="1" width="16" height="10" fill="url(#g-dim)" stroke="#808080" stroke-width="2"/><rect x="13" y="17" width="16" height="10" fill="url(#g-dimr)" stroke="#808080" stroke-width="2"/><path d="M21 4H31L26 11ZM0 25H10L5 18Z" fill="#777"/></svg>
            </div>
            <div class="form gform">
              <span class="bright">Type:</span>
              <div class="seg s48"><button aria-label="Linear"><svg viewBox="0 0 32 32"><rect x="1" y="1" width="30" height="30" fill="url(#g-dark)" stroke="#c2c2c2" stroke-width="2"/></svg></button><button aria-label="Radial"><svg viewBox="0 0 32 32"><rect x="1" y="1" width="30" height="30" fill="url(#g-rad)" stroke="#c2c2c2" stroke-width="2"/></svg></button><button aria-label="Freeform"><svg viewBox="0 0 32 32"><rect x="1" y="1" width="30" height="30" fill="#333"/><path d="M9 19Q13 15 17 16Q22 16 24 12" fill="none" stroke="#777" stroke-width="15" stroke-linecap="round"/><path d="M9 19Q13 15 17 16Q22 16 24 12" fill="none" stroke="#a0a0a0" stroke-width="9" stroke-linecap="round"/><path d="M9 19Q13 15 17 16Q22 16 24 12" fill="none" stroke="#e0e0e0" stroke-width="3" stroke-linecap="round"/><rect x="1" y="1" width="30" height="30" fill="none" stroke="#c2c2c2" stroke-width="2"/></svg></button></div>
              <span>Stroke:</span>
              <div class="seg s44"><button disabled aria-label="Within stroke"><svg viewBox="0 0 28 28"><path d="M0 0H28V14H14V28H0Z" fill="url(#g-dim)"/><path d="M1 28V1H28" fill="none" stroke="#777" stroke-width="2"/></svg></button><button disabled aria-label="Along stroke"><svg viewBox="0 0 28 28"><path d="M0 0H28V14H14V28H0Z" fill="url(#g-dimr)"/><path d="M0 0L12 12" stroke="#444"/></svg></button><button disabled aria-label="Across stroke"><svg viewBox="0 0 28 28"><path d="M0 0H28V14H14V28H0Z" fill="#5f5f5f"/><path d="M1 28V1H28" fill="none" stroke="#777" stroke-width="2"/><path d="M11 28V11H28" fill="none" stroke="#777" stroke-width="5"/></svg></button></div>
              <svg class="lic" width="28" height="24" viewBox="0 0 28 24"><path d="M22 1L1 22H28M15 8Q21 13 21 22"/></svg>
              <div class="select off"><select disabled aria-label="Angle"></select><svg class="chev"><use href="#chev"/></svg></div>
              <svg class="lic" width="34" height="28" viewBox="0 0 34 28"><ellipse cx="21" cy="12" rx="12" ry="8"/><path d="M4 4V21M10 22V28M10 25H32M32 22V28"/><path d="M4 0L8 6H0ZM4 24L8 18H0Z" fill="#808080" stroke="none"/></svg>
              <div class="select off"><select disabled aria-label="Aspect ratio"></select><svg class="chev"><use href="#chev"/></svg></div>
            </div>
          </div>
          <div class="gbar"><i></i><svg class="dim" width="22" height="24"><use href="#trash"/></svg></div>
          <div class="gradbot">
            <svg class="dim" width="34" height="34"><use href="#dropper"/></svg>
            <div class="form gform">
              <label for="gop">Opacity:</label><div class="select off"><select id="gop" disabled></select><svg class="chev"><use href="#chev"/></svg></div>
              <label for="glo">Location:</label><div class="select off"><select id="glo" disabled></select><svg class="chev"><use href="#chev"/></svg></div>
            </div>
          </div>
        </div>
        <div class="split"></div>
        <div class="tabs"><button class="tab on lead"><svg width="10" height="16"><use href="#updown"/></svg>Stroke</button><button class="tab">Properties</button><span class="fill"><svg class="burger"><use href="#burger"/></svg></span></div>
        <div class="body strk">
          <div class="form sform">
            <label for="wt" class="bright">Weight:</label>
            <div class="combo w192"><span class="step"><svg><use href="#steps"/></svg></span><input id="wt" value="1 px"><button aria-label="Weights"><svg class="chev"><use href="#chev"/></svg></button></div>
            <span class="bright">Cap:</span>
            <div class="seg s44"><button class="on" aria-label="Butt cap"><svg viewBox="0 0 28 28"><path fill="#fff" d="M10 1H26V27H10V18H6V10H10Z"/><path d="M8 12H14V13H26V15H14V16H8Z" fill="#303030"/></svg></button><button aria-label="Round cap"><svg viewBox="0 0 28 28"><path class="f" d="M14 1H26V27H14Q2 26 2 14Q2 2 14 1Z"/><path class="k" d="M10 11H16V13H26V15H16V17H10Z"/></svg></button><button aria-label="Projecting cap"><svg viewBox="0 0 28 28"><path class="f" d="M2 1H26V27H2Z"/><path class="k" d="M10 11H16V13H26V15H16V17H10Z"/></svg></button></div>
            <span class="bright">Corner:</span>
            <div class="corner"><div class="seg s44"><button class="on" aria-label="Miter join"><svg viewBox="0 0 28 28"><path fill="#fff" d="M2 2H26V20H20V26H2Z"/><path fill="#303030" d="M10 10H16V12H26V14H16V26H13V17H10Z"/></svg></button><button aria-label="Round join"><svg viewBox="0 0 28 28"><path class="f" d="M14 2H26V20H20V26H2V14Q3 3 14 2Z"/><path class="k" d="M10 10H16V12H26V14H16V26H13V17H10Z"/></svg></button><button aria-label="Bevel join"><svg viewBox="0 0 28 28"><path class="f" d="M14 2H26V20H20V26H2V13Z"/><path class="k" d="M10 10H16V12H26V14H16V26H13V17H10Z"/></svg></button></div>
              <label class="bright limit">Limit:<input class="box" value="10"></label><span class="bright">x</span></div>
            <span class="bright">Align Stroke:</span>
            <div class="seg s44"><button aria-label="Center"><svg viewBox="0 0 28 28"><path class="f" d="M2 2H15V12H26V26H2Z"/><path class="k" d="M8 2H10V17H26V19H12V22H6V17H8Z"/></svg></button><button class="on" aria-label="Inside"><svg viewBox="0 0 28 28"><path fill="#fff" d="M8 2H16V12H26V20H8Z"/><path d="M4 2V19M8 24H26" stroke="#fff" stroke-width="2" fill="none"/><circle cx="6" cy="22" r="3.500" fill="#303030" stroke="#fff" stroke-width="2"/></svg></button><button aria-label="Outside"><svg viewBox="0 0 28 28"><path class="f" d="M2 2H12V10H16V15H26V26H2Z"/><path class="l" d="M15 2V10M17 12H26"/><path class="k" d="M10 13H16V18H10Z"/></svg></button></div>
          </div>
          <hr>
          <div class="dashrow"><label><input type="checkbox">Dashed Line</label><div class="seg wide"><button disabled aria-label="Preserve dashes"><svg width="56" height="26" viewBox="0 0 56 26"><path d="M2 2H18M26 2H42M49 2H55V13M1 11V24H7M15 24H31M39 24H55"/></svg></button><button disabled aria-label="Align dashes"><svg width="56" height="26" viewBox="0 0 56 26"><path d="M10 2H2V9M2 17V24H10M20 2H36M20 24H36M46 2H54V9M54 17V24H46"/></svg></button></div></div>
          <div class="dashes">
            <label><input disabled>dash</label><label><input disabled>gap</label><label><input disabled>dash</label><label><input disabled>gap</label><label><input disabled>dash</label><label><input disabled>gap</label>
          </div>
          <hr class="h14">
          <div class="form sform arrows">
            <span>Arrowheads:</span>
            <div class="pair"><div class="select off lite"><select disabled aria-label="Start arrowhead"></select><svg class="chev"><use href="#chev"/></svg></div><div class="select off lite"><select disabled aria-label="End arrowhead"></select><svg class="chev"><use href="#chev"/></svg></div><svg class="pic" width="28" height="24" viewBox="0 0 28 24"><path d="M4 6H18M10 18H24" stroke="currentColor" stroke-width="3"/><path d="M16 0L28 6L16 12ZM12 12L0 18L12 24Z" fill="currentColor"/></svg></div>
            <span>Scale:</span>
            <div class="pair"><div class="combo off"><span class="step"><svg><use href="#steps"/></svg></span><input disabled aria-label="Start scale" value="100%"></div><div class="combo off"><span class="step"><svg><use href="#steps"/></svg></span><input disabled aria-label="End scale" value="100%"></div><svg class="pic" width="28" height="32" viewBox="0 0 28 32" fill="none" stroke="currentColor" stroke-width="3"><path d="M7 12V8Q8 2 14 2Q20 2 20 8V14M7 18V24Q8 30 14 30Q20 30 20 25M0 2L28 30"/></svg></div>
            <span>Align:</span>
            <div class="seg s44"><button disabled aria-label="Extend arrow"><svg viewBox="0 0 28 28"><path class="d" d="M2 8H15M15 5V11M2 19H15"/><path d="M14 13L26 19L14 25Z" fill="#777"/></svg></button><button disabled aria-label="Arrow at end"><svg viewBox="0 0 28 28"><path class="d" d="M2 8H25M25 4V12M2 19H15"/><path d="M14 13L26 19L14 25Z" fill="#777"/></svg></button></div>
          </div>
          <hr class="prof">
          <div class="form sform">
            <span>Profile:</span>
            <div class="pair"><div class="select off lite w222"><select disabled aria-label="Profile"></select><svg class="chev"><use href="#chev"/></svg></div><span class="flips"><svg width="26" height="24" viewBox="0 0 26 24"><path d="M1 3V21L8 12Z" class="d"/><path d="M26 2V22L16 12Z" fill="#777"/><path class="d" d="M13 0V24" stroke-dasharray="2 2"/></svg><svg width="22" height="28" viewBox="0 0 22 28"><path d="M3 1H19L11 10Z" fill="#777"/><path class="d" d="M3 26H19L11 19Z"/><path class="d" stroke-dasharray="2 2" d="M0 14H22"/></svg></span></div>
          </div>
        </div>
        <div class="dock-foot"><svg width="38" height="8"><use href="#grip"/></svg></div>
      </section>
    </div>
  </div>
</div>
</body>
</html>
```
FILE: styles.css
```css
* { box-sizing: border-box; }
html, body { height: 100%; margin: 0; }
body {
  display: flex;
  flex-direction: column;
  overflow: hidden;
  background: #000;
  color: #d0d0d0;
  font: 21px/28px "Open Sans", "Noto Sans", sans-serif;
}
button, input, select { font: inherit; color: inherit; margin: 0; padding: 0; border: 0; background: none; border-radius: 0; }
button { display: flex; align-items: center; justify-content: center; }
input { min-width: 0; }
select { appearance: none; }
svg { display: block; flex: none; }
.defs { position: absolute; width: 0; height: 0; }
.l { fill: none; stroke: #c2c2c2; stroke-width: 2; }
.f { fill: #c2c2c2; }
.k { fill: #535353; }
.g { fill: #777; }
.d { fill: none; stroke: #777; stroke-width: 2; }
.w3 { stroke-width: 3; }
.w4 { stroke-width: 4; }
.w5 { stroke-width: 5; }
.glyph { fill: #c2c2c2; text-anchor: middle; font-family: "Liberation Serif", serif; font-weight: 700; }
.glyph.thin { font-family: "Open Sans", sans-serif; font-weight: 400; }
.glyph.cut { fill: #535353; }
.chev { width: 16px; height: 10px; }
.dim { color: #777; }
.mt10 { margin-top: 10px; }
hr { height: 2px; margin: 10px 0 12px; border: 0; background: #4a4a4a; }

/* system menu bar */
.menubar {
  display: flex;
  align-items: center;
  height: 46px;
  flex: none;
  padding: 0 46px 0 42px;
  background: #181818;
  border-bottom: 2px solid #000;
  color: #fff;
  font: 500 28px/32px Inter, sans-serif;
}
.apple { width: 26px; height: 32px; margin-bottom: 4px; }
.menus { display: flex; gap: 34px; margin-left: 41px; }
.menus a { color: inherit; text-decoration: none; }
.menus .app { margin-right: 8px; font-weight: 700; }
.tray { display: flex; align-items: center; gap: 28px; margin-left: auto; }
.battery { display: flex; align-items: center; gap: 10px; margin-left: 8px; font-size: 24px; }
.clock { margin: 0 13px 0 12px; }
.input-src { width: 32px; height: 32px; margin-right: 14px; border-radius: 5px; background: #fff; color: #222; font-size: 24px; text-align: center; }
.spot { margin-right: 6px; }
.tray svg:last-child { margin-left: -4px; }

/* window */
.window { display: flex; flex-direction: column; flex: 1; min-height: 0; border: 2px solid #383838; border-radius: 10px 10px 0 0; background: #535353; border-top-color: #3c3c3c; }
.titlebar { display: flex; align-items: center; height: 68px; flex: none; border-bottom: 2px solid #383838; }
.title-left { display: flex; align-items: center; width: 43.500%; padding-left: 17px; }
.lights { display: flex; gap: 18px; margin-right: 31px; }
.lights i { width: 22px; height: 22px; border-radius: 50%; background: #8e8d92; }
.lights .dot-in { background: radial-gradient(#2b2b2e 4px, #8e8d92 5px); }
.vsep { width: 3px; height: 40px; background: #5f5f5f; }
.title-left .vsep { margin: 0 17px 0 22px; }
.arrange { gap: 18px; }
h1 { margin: 0; font: 400 26px/32px "Open Sans", sans-serif; color: #d0d0d0; white-space: nowrap; }
.title-right { display: flex; align-items: center; margin-left: auto; padding-right: 8px; }
.title-right .vsep { margin: 0 11px 0 28px; }
.workspace { gap: 23px; margin-left: 14px; font: 700 25px/32px "Open Sans", sans-serif; color: #e4e4e4; }
.stock { display: flex; align-items: center; width: 374px; height: 42px; padding-left: 6px; border: 2px solid #606060; border-radius: 6px; background: #454545; color: #c2c2c2; }
.stock input { flex: 1; padding-left: 4px; font-size: 23px; }
.stock input::placeholder { color: #8a8a8a; opacity: 1; }

/* control bar */
.controlbar { display: flex; align-items: center; height: 68px; flex: none; border-bottom: 2px solid #383838; color: #c8c8c8; }
.dots-grip { width: 4px; height: 38px; margin: 0 15px 0 9px; background: repeating-linear-gradient(#383838 0 2px, #535353 2px 4px); }
.ctl-name { width: 177px; }
.hair { width: 2px; height: 50px; background: #4a4a4a; }
.select { display: grid; grid-template-columns: 1fr 16px 12px; align-items: center; height: 42px; border: 2px solid #606060; border-radius: 6px; background: #4b4b4b; color: #fff; font-weight: 600; }
.select select { grid-area: 1 / 1 / 2 / 4; width: 100%; height: 100%; padding-left: 12px; }
.select .chev { grid-area: 1 / 2; pointer-events: none; }
.preset { width: 240px; margin: 0 10px 0 11px; }
.seg { display: flex; border: 2px solid #606060; border-radius: 6px; overflow: hidden; width: max-content; }
.seg button + button { border-left: 2px solid #606060; }
.seg .on { background: #2f2f2f; }
.orient button { width: 46px; height: 44px; }
.orient { margin-right: 28px; }
.del-art { margin: 0 38px 0 40px; }
.box { height: 42px; padding: 0 10px; border: 2px solid #606060; border-radius: 6px; background: #454545; color: #fff; font-weight: 500; }
.lab-name { width: 69px; }
.w-name { width: 243px; margin-right: 22px; }
.w-num { width: 134px; padding-left: 8px; }
.darkbtn { width: 48px; height: 48px; border-radius: 6px; background: #2f2f2f; }
.opt { margin: 0 20px 0 22px; }
.lab-x { width: 46px; padding-left: 20px; }
.lab-y { width: 46px; padding-left: 20px; }
.lab-w { width: 40px; padding-left: 10px; }
.linkb { margin-left: 20px; color: #aaa; }
.lab-h { width: 46px; padding-left: 18px; }
.flat { border-radius: 6px; background: #595959; color: #858585; }
.rearr { width: 171px; height: 38px; margin: 0 11px 0 10px; }
.alignto { margin-left: 24px; gap: 4px; }
.ctl-right { display: flex; align-items: center; margin-left: auto; padding-right: 32px; }
.ctl-right .snap { margin: 0 38px 0 24px; gap: 14px; }

/* work area */
.work { position: relative; display: flex; flex: 1; min-height: 0; }
.tools { display: flex; flex-direction: column; align-items: center; width: 82px; flex: none; border-right: 2px solid #383838; box-shadow: inset -2px 0 #484848, inset -4px 0 #383838; padding-right: 4px; }
.tools-head { align-self: stretch; justify-content: flex-start; height: 24px; flex: none; padding-left: 10px; border-bottom: 2px solid #383838; background: #424242; color: #c2c2c2; }
.tools-grip { margin: 6px 0 26px; }
.toollist { display: flex; flex-direction: column; gap: 4px; }
.toollist button { width: 60px; height: 44px; }
.toollist button > svg { width: 60px; height: 48px; margin: -2px 0; color: #c2c2c2; }
.toollist .on { border-radius: 6px; background: linear-gradient(#2f2f2f, #2f2f2f) center / 56px 44px no-repeat; }
.colors { display: flex; flex-direction: column; align-items: center; padding-top: 14px; margin-top: 4px; border-top: 2px solid #4a4a4a; width: 60px; }
.swaprow { display: flex; gap: 18px; margin: -4px -6px 12px 0; }
.modes { margin-top: 12px; }
.drawmode { margin-top: 18px; }
.screenmode { margin-top: 26px; }
.more { margin-top: 48px; }

.doc { display: flex; flex-direction: column; flex: 1; min-width: 0; }
.doctabs { display: flex; height: 58px; flex: none; border-bottom: 2px solid #383838; background: #424242; }
.doctab { display: flex; align-items: center; gap: 20px; padding: 0 23px 2px 16px; border-right: 2px solid #383838; background: #535353; color: #f0f0f0; font-weight: 700; }
.stage { display: flex; flex: 1; min-height: 0; }
.canvas { position: relative; flex: 1; background: #fff; }
.artboard { position: absolute; left: 772px; top: 764px; width: 834px; height: 476px; }
.ab-label { position: absolute; left: 780px; top: 772px; height: 38px; padding: 0 2px; border: 2px solid #16263a; background: #cfe3f6; color: #111; font: 18px/34px "Liberation Sans", sans-serif; white-space: nowrap; }
.vscroll { display: flex; align-items: flex-end; justify-content: center; width: 32px; padding-bottom: 16px; background: #4a4a4a; color: #999; }
.status { display: flex; align-items: center; height: 32px; flex: none; padding-left: 8px; }
.combo { display: flex; align-items: center; height: 42px; border: 2px solid #606060; border-radius: 6px; overflow: hidden; background: #454545; color: #fff; font-weight: 600; }
.combo > input { flex: 1; width: 0; padding-left: 6px; }
.combo > button, .step { display: flex; align-items: center; justify-content: center; align-self: stretch; width: 36px; flex: none; background: #4b4b4b; }
.combo > button { padding-right: 4px; border-left: 2px solid #606060; }
.step { border-right: 2px solid #606060; }
.step svg { width: 16px; height: 34px; }
.status .combo { height: 38px; align-self: flex-start; border-radius: 6px 6px 0 0; }
.status .combo > input { padding-left: 5px; }
.zoomf { width: 138px; }
.pagef { width: 118px; }
.nav { margin: 2px 18px 0 17px; }
.pagef + .nav { margin: 2px 14px 0 18px; }
.toggle { flex: none; width: 402px; border-left: 2px solid #4a4a4a; border-right: 2px solid #4a4a4a; line-height: 32px; padding-top: 3px; height: 32px; text-align: center; }
.play { width: 34px; }
.hscroll { display: flex; align-items: center; justify-content: space-between; flex: 1; align-self: stretch; padding: 0 46px 0 13px; background: #484848; }
.thumb { width: 50px; height: 30px; margin-left: 200px; border-radius: 15px; background: #606060; }

/* floating docks */
.docks { position: absolute; top: 56px; right: -2px; display: flex; align-items: flex-start; }
.dock { border: 2px solid #383838; border-radius: 10px 10px 0 0; background: #535353; box-shadow: 0 4px 16px rgba(0, 0, 0, .5); }
.dock-a { width: 616px; }
.dock-b { width: 508px; }
.dock-head { display: flex; align-items: center; justify-content: space-between; height: 24px; padding: 2px 14px 0 10px; border-bottom: 2px solid #383838; border-radius: 8px 8px 0 0; background: #424242; color: #b0b0b0; }
.tabs { display: flex; height: 54px; background: #424242; }
.tab { flex: none; padding: 0 18px 4px; border-right: 2px solid #383838; border-bottom: 2px solid #383838; color: #aaa; font-size: 20px; font-weight: 700; white-space: nowrap; }
.tab.on { border-bottom-color: #535353; background: #535353; color: #f4f4f4; }
.tab.lead { gap: 10px; padding-left: 10px; }
.tab.lead svg { color: #999; }
.t-color, .t-cut { justify-content: flex-start; overflow: hidden; }
.t-color { width: 78px; padding-right: 0; }
.t-sw { padding: 0 16px 4px; }
.t-cut { width: 109px; padding: 0 0 4px 16px; }
.fill { display: flex; align-items: center; justify-content: flex-end; flex: 1; padding-right: 12px; border-bottom: 2px solid #383838; color: #b0b0b0; }
.burger { width: 20px; height: 14px; }
.body { padding: 12px 10px 10px; }
.split { height: 6px; border: solid #383838; border-width: 2px 0; background: #484848; }
.dock-foot { display: flex; justify-content: center; height: 16px; border-top: 4px solid #383838; }

.w460 { width: 460px; color: #c2c2c2; }
.w460 svg:first-child { margin-left: 2px; }
.w460 input { color: #fff; padding-left: 9px; }
.w460 button { color: #fff; }
.style > input { padding-left: 12px; }
.charrow { display: grid; grid-template-columns: 38px 176px 1fr 38px 176px; column-gap: 4px; align-items: center; }
.charrow .ci:nth-child(3) { grid-column: 4; }
.charrow .combo:nth-child(4) { grid-column: 5; }
.ci { width: 38px; height: 40px; overflow: visible; }
hr.tight { margin: 0; }
.charrow + hr.tight { margin-top: 10px; }
.ttrow { display: flex; justify-content: space-between; height: 50px; padding: 0 12px 0 6px; font: 700 30px/32px "Liberation Serif", serif; color: #c2c2c2; }
.ttrow span { display: flex; gap: 26px; }
.ttrow small { font-size: 24px; }
.ttrow button { align-items: baseline; padding-top: 8px; }
.ttrow sup, .ttrow sub { font-size: 16px; line-height: 16px; }
.ttrow sup { align-self: flex-start; }
.ttrow sub { align-self: flex-end; padding-bottom: 6px; }
.ttrow .u { text-decoration: underline; text-underline-offset: 4px; }
.ttrow .s { text-decoration: line-through; margin-left: 12px; }
.langrow { display: grid; grid-template-columns: 188px 1fr 188px; margin-top: 12px; }
.aa { padding-right: 16px; text-align: right; color: #c2c2c2; }
.aa sup, .aa sub { font-size: 21px; line-height: 20px; }
hr.short { width: 448px; }
.snaprow { display: flex; align-items: center; gap: 20px; height: 48px; color: #d0d0d0; }
.glyphrow { display: flex; align-items: center; gap: 22px; margin-top: 10px; }
.glyphrow button { width: 52px; height: 52px; border-radius: 6px; background: #595959; }
.glyphrow .nobg { background: none; }
.glyphrow .nobg svg { opacity: .7; }
.glyphrow svg { width: 52px; height: 52px; overflow: visible; }
.glyphrow .l { stroke: #808080; }
.sn { fill: #808080; text-anchor: middle; font: 400 28px "Open Sans", sans-serif; }

.path { padding: 14px 10px 22px; color: #d0d0d0; }
.path p { margin: 0; }
.shapes, .finders { display: flex; align-items: center; }
.shapes { gap: 48px; margin: 16px 0 18px 12px; height: 38px; }
.path svg { width: 28px; height: 28px; }
.expand { width: 156px; height: 38px; margin-left: -12px; }
.finders { gap: 50px; margin: 24px 0 0 20px; }
.links { padding-bottom: 0; }
.linkbox { height: 288px; border: 2px solid #5d5d5d; border-radius: 6px; }
.linkfoot { display: flex; align-items: center; justify-content: space-between; height: 38px; padding: 0 56px 0 22px; }
.linkfoot span { display: flex; align-items: center; gap: 24px; fill: none; stroke: #777; stroke-width: 2; }
.linkfoot .last { margin-left: 6px; }

.sw { padding-bottom: 0; }
.swtop { display: flex; justify-content: space-between; align-items: flex-start; margin-bottom: 10px; }
.views button { width: 46px; height: 44px; }
.views button + button { width: 48px; }
.swbox { display: flex; justify-content: space-between; height: 214px; border: 2px solid #606060; }
.swgrid { display: grid; grid-template-columns: repeat(16, 26px); grid-auto-rows: 26px; gap: 2px; }
.swgrid svg { width: 26px; height: 26px; color: #c2c2c2; }
.group { margin-top: 6px; }
.s-bw { background: linear-gradient(90deg, #fff, #000); }
.s-blue { background: linear-gradient(90deg, #d8e6f2, #4fa0d8 50%, #2a5f9f); }
.s-pink { background: linear-gradient(90deg, #f083ac, rgba(240, 131, 172, .1)), repeating-conic-gradient(#ccc 0 25%, #fff 0 50%) 0 0 / 8px 8px; }
.s-sun { background: radial-gradient(#fff, #f09840 60%); }
.swscroll { display: flex; flex-direction: column; justify-content: space-between; padding: 7px 5px 9px 0; color: #646464; }
.flip { transform: rotate(180deg); }
.swfoot { display: flex; align-items: center; justify-content: space-between; height: 38px; padding: 0 46px 0 12px; color: #c2c2c2; }
.swfoot svg:nth-child(4) { margin-left: 40px; }

.form { display: grid; align-items: center; justify-items: start; color: #858585; }
.form > span, .form > label, .form > .lic { justify-self: end; white-space: nowrap; }
.form .bright { color: #d0d0d0; }
.gform { grid-template-columns: 92px 156px; column-gap: 8px; row-gap: 10px; }
.gradtop { display: flex; }
.gradleft { width: 72px; flex: none; }
.gprev { display: flex; align-items: center; gap: 6px; margin-bottom: 12px; }
.gprev i { width: 64px; height: 64px; flex: none; border: 2px solid #2b2b2b; background: linear-gradient(90deg, #fff, #a8a6a7 45%, #231f20); }
.rev { margin: 22px 0 0 10px; }
.gradleft svg { overflow: visible; }
.s48 button { width: 46px; height: 44px; }
.s48 button + button { width: 50px; }
.s48 svg { width: 32px; height: 32px; }
.s44 button { width: 42px; height: 40px; }
.s44 button + button { width: 46px; }
.s44 svg { width: 28px; height: 28px; }
.seg button:disabled { color: #777; }
.lic { fill: none; stroke: #808080; stroke-width: 2; }
.select.off { width: 156px; border-color: #595959; background: #595959; color: #777; }
.gbar { display: flex; align-items: center; justify-content: space-between; margin: 40px 14px 38px 19px; }
.gbar i { width: 400px; height: 32px; border: 2px solid #2b2b2b; outline: 2px solid #5f5f5f; background: linear-gradient(90deg, #fff, #a8a6a7 42%, #231f20); }
.gradbot { display: flex; align-items: center; }
.gradbot > svg { margin: 0 25px 0 13px; }

.strk { padding-bottom: 14px; }
.sform { grid-template-columns: 125px 1fr; column-gap: 7px; row-gap: 10px; }
.w192 { width: 192px; }
.corner { display: flex; align-items: center; justify-content: space-between; width: 350px; }
.limit { display: flex; align-items: center; gap: 7px; margin-left: 38px; }
.limit .box { width: 88px; }
.dashrow { display: flex; align-items: center; justify-content: space-between; height: 44px; }
.dashrow label { display: flex; align-items: center; gap: 10px; color: #fff; font-weight: 500; }
.dashrow input { appearance: none; width: 24px; height: 24px; margin-left: 2px; border: 2px solid #c2c2c2; border-radius: 4px; }
.wide button { width: 74px; height: 40px; }
.wide button + button { width: 76px; }
.wide path { fill: none; stroke: #777; stroke-width: 4; }
.dashes { display: grid; grid-template-columns: repeat(6, 70px); justify-content: space-between; padding: 0 4px 0 2px; margin-top: 10px; color: #858585; }
.dashes label { display: flex; flex-direction: column; align-items: center; gap: 2px; }
.dashes input { width: 70px; height: 42px; border-radius: 6px; background: #595959; }
hr.h14 { margin-bottom: 14px; }
.arrows { row-gap: 17px; }
.pair { display: flex; align-items: center; gap: 20px; width: 352px; }
.pair .off { width: 124px; }
.pair .w222 { width: 222px; }
.select.lite { background: linear-gradient(90deg, #808080 calc(100% - 36px), #595959 0); border-width: 0; border-radius: 0 6px 6px 0; grid-template-columns: 1fr 16px 11px; }
.pic { margin-left: auto; margin-right: 10px; color: #808080; }
.flips { display: flex; gap: 24px; align-items: center; margin: 0 14px 0 auto; }
.combo.off { border-color: #595959; background: #595959; color: #6f6f6f; }
.combo.off .step { background: none; border-right-color: #535353; color: #777; }
hr.prof { margin: 10px 0 14px; }
```
